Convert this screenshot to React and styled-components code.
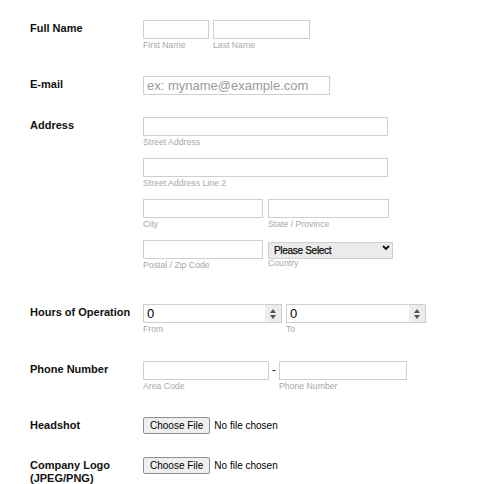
import React from "react";
import styled, { createGlobalStyle } from "styled-components";

const Global = createGlobalStyle`
  html, body { margin: 0; padding: 0; background: #fff; }
  body { font-family: "Liberation Sans", Arial, sans-serif; color: #000; }
  * { box-sizing: border-box; }
`;

const Form = styled.div`
  padding: 20px 0 0 30px;
  width: 500px;
`;

const Row = styled.div`
  display: flex;
  align-items: flex-start;
  margin-bottom: ${(p) => p.$mb ?? 24}px;
`;

const Label = styled.div`
  width: 113px;
  flex: none;
  font-size: 11px;
  font-weight: bold;
  line-height: 13px;
  padding-top: 2px;
  color: #111;
`;

const Fields = styled.div`
  display: flex;
  flex-direction: column;
`;

const Line = styled.div`
  display: flex;
  align-items: flex-start;
  gap: ${(p) => p.$gap ?? 4}px;
  margin-bottom: ${(p) => p.$mb ?? 0}px;
`;

const Field = styled.div`
  display: flex;
  flex-direction: column;
  width: ${(p) => p.$w}px;
`;

const TextInput = styled.input`
  width: 100%;
  height: 19px;
  border: 1px solid #cfcfcf;
  background: #fff;
  padding: 0 3px;
  font-family: "Liberation Sans", Arial, sans-serif;
  font-size: 13px;
  outline: none;
  &::placeholder { color: #9a9a9a; }
`;

const Sub = styled.span`
  font-size: 8.7px;
  line-height: 13px;
  color: #a8a8a8;
  white-space: nowrap;
`;

const SelectWrap = styled.div`
  position: relative;
  width: 100%;
  height: 17px;
`;

const Select = styled.select`
  appearance: none;
  width: 100%;
  height: 17px;
  border: 1px solid #d0d0d0;
  background: #ebebeb;
  font-family: "Liberation Sans", Arial, sans-serif;
  font-size: 10px;
  letter-spacing: -0.3px;
  -webkit-text-stroke: 0.25px #111;
  color: #111;
  padding: 0 5px;
  outline: none;
`;

const Chevron = styled.svg`
  position: absolute;
  right: 3px;
  top: 5px;
  pointer-events: none;
`;

const Spin = styled.div`
  display: flex;
  width: 100%;
  height: 19px;
  border: 1px solid #cfcfcf;
  background: #fff;
`;

const SpinText = styled.input`
  flex: 1;
  min-width: 0;
  border: none;
  outline: none;
  padding: 0 3px;
  font-family: "Liberation Sans", Arial, sans-serif;
  font-size: 13px;
  background: transparent;
`;

const SpinButtons = styled.div`
  width: 16px;
  background: #ececec;
  display: flex;
  flex-direction: column;
  align-items: center;
  justify-content: center;
  gap: 2px;
`;

const Dash = styled.span`
  width: 10px;
  text-align: center;
  font-size: 12px;
  line-height: 19px;
  color: #333;
`;

const FileInput = styled.input`
  font-family: "Liberation Sans", Arial, sans-serif;
  font-size: 10px;
  line-height: 12px;
  color: #000;
  &::file-selector-button {
    font-family: "Liberation Sans", Arial, sans-serif;
    font-size: 10px;
    line-height: 12px;
    margin-right: 4px;
    padding: 2px 6px 1px;
    border: 1px solid #8f8f8f;
    border-radius: 2px;
    background: #efefef;
    color: #000;
  }
`;

function NumberField({ w, sub }) {
  return (
    <Field $w={w}>
      <Spin>
        <SpinText defaultValue="0" />
        <SpinButtons>
          <svg width="6" height="4" viewBox="0 0 6 4"><path d="M3 0L6 4H0z" fill="#555" /></svg>
          <svg width="6" height="4" viewBox="0 0 6 4"><path d="M0 0H6L3 4z" fill="#555" /></svg>
        </SpinButtons>
      </Spin>
      <Sub>{sub}</Sub>
    </Field>
  );
}

function TextField({ w, sub, placeholder }) {
  return (
    <Field $w={w}>
      <TextInput placeholder={placeholder} />
      {sub && <Sub>{sub}</Sub>}
    </Field>
  );
}

export default function App() {
  return (
    <>
      <Global />
      <Form>
        <Row>
          <Label>Full Name</Label>
          <Line>
            <TextField w={66} sub="First Name" />
            <TextField w={97} sub="Last Name" />
          </Line>
        </Row>
        <Row $mb={22}>
          <Label>E-mail</Label>
          <TextField w={187} placeholder="ex: myname@example.com" />
        </Row>
        <Row $mb={23}>
          <Label>Address</Label>
          <Fields>
            <Line $mb={9}>
              <TextField w={245} sub="Street Address" />
            </Line>
            <Line $mb={9}>
              <TextField w={245} sub="Street Address Line 2" />
            </Line>
            <Line $gap={5} $mb={9}>
              <TextField w={120} sub="City" />
              <TextField w={121} sub="State / Province" />
            </Line>
            <Line $gap={5} $mb={9}>
              <TextField w={120} sub="Postal / Zip Code" />
              <Field $w={125}>
                <SelectWrap>
                  <Select defaultValue="">
                    <option value="">Please Select</option>
                  </Select>
                  <Chevron width="8" height="6" viewBox="0 0 8 6">
                    <path d="M1 1L4 4L7 1" stroke="#111" strokeWidth="1.8" fill="none" />
                  </Chevron>
                </SelectWrap>
                <Sub>Country</Sub>
              </Field>
            </Line>
          </Fields>
        </Row>
        <Row $mb={25}>
          <Label>Hours of Operation</Label>
          <Line>
            <NumberField w={139} sub="From" />
            <NumberField w={140} sub="To" />
          </Line>
        </Row>
        <Row>
          <Label>Phone Number</Label>
          <Line $gap={0}>
            <TextField w={126} sub="Area Code" />
            <Dash>-</Dash>
            <TextField w={128} sub="Phone Number" />
          </Line>
        </Row>
        <Row $mb={23}>
          <Label>Headshot</Label>
          <FileInput type="file" />
        </Row>
        <Row $mb={0}>
          <Label>Company Logo<br />(JPEG/PNG)</Label>
          <FileInput type="file" />
        </Row>
      </Form>
    </>
  );
}
